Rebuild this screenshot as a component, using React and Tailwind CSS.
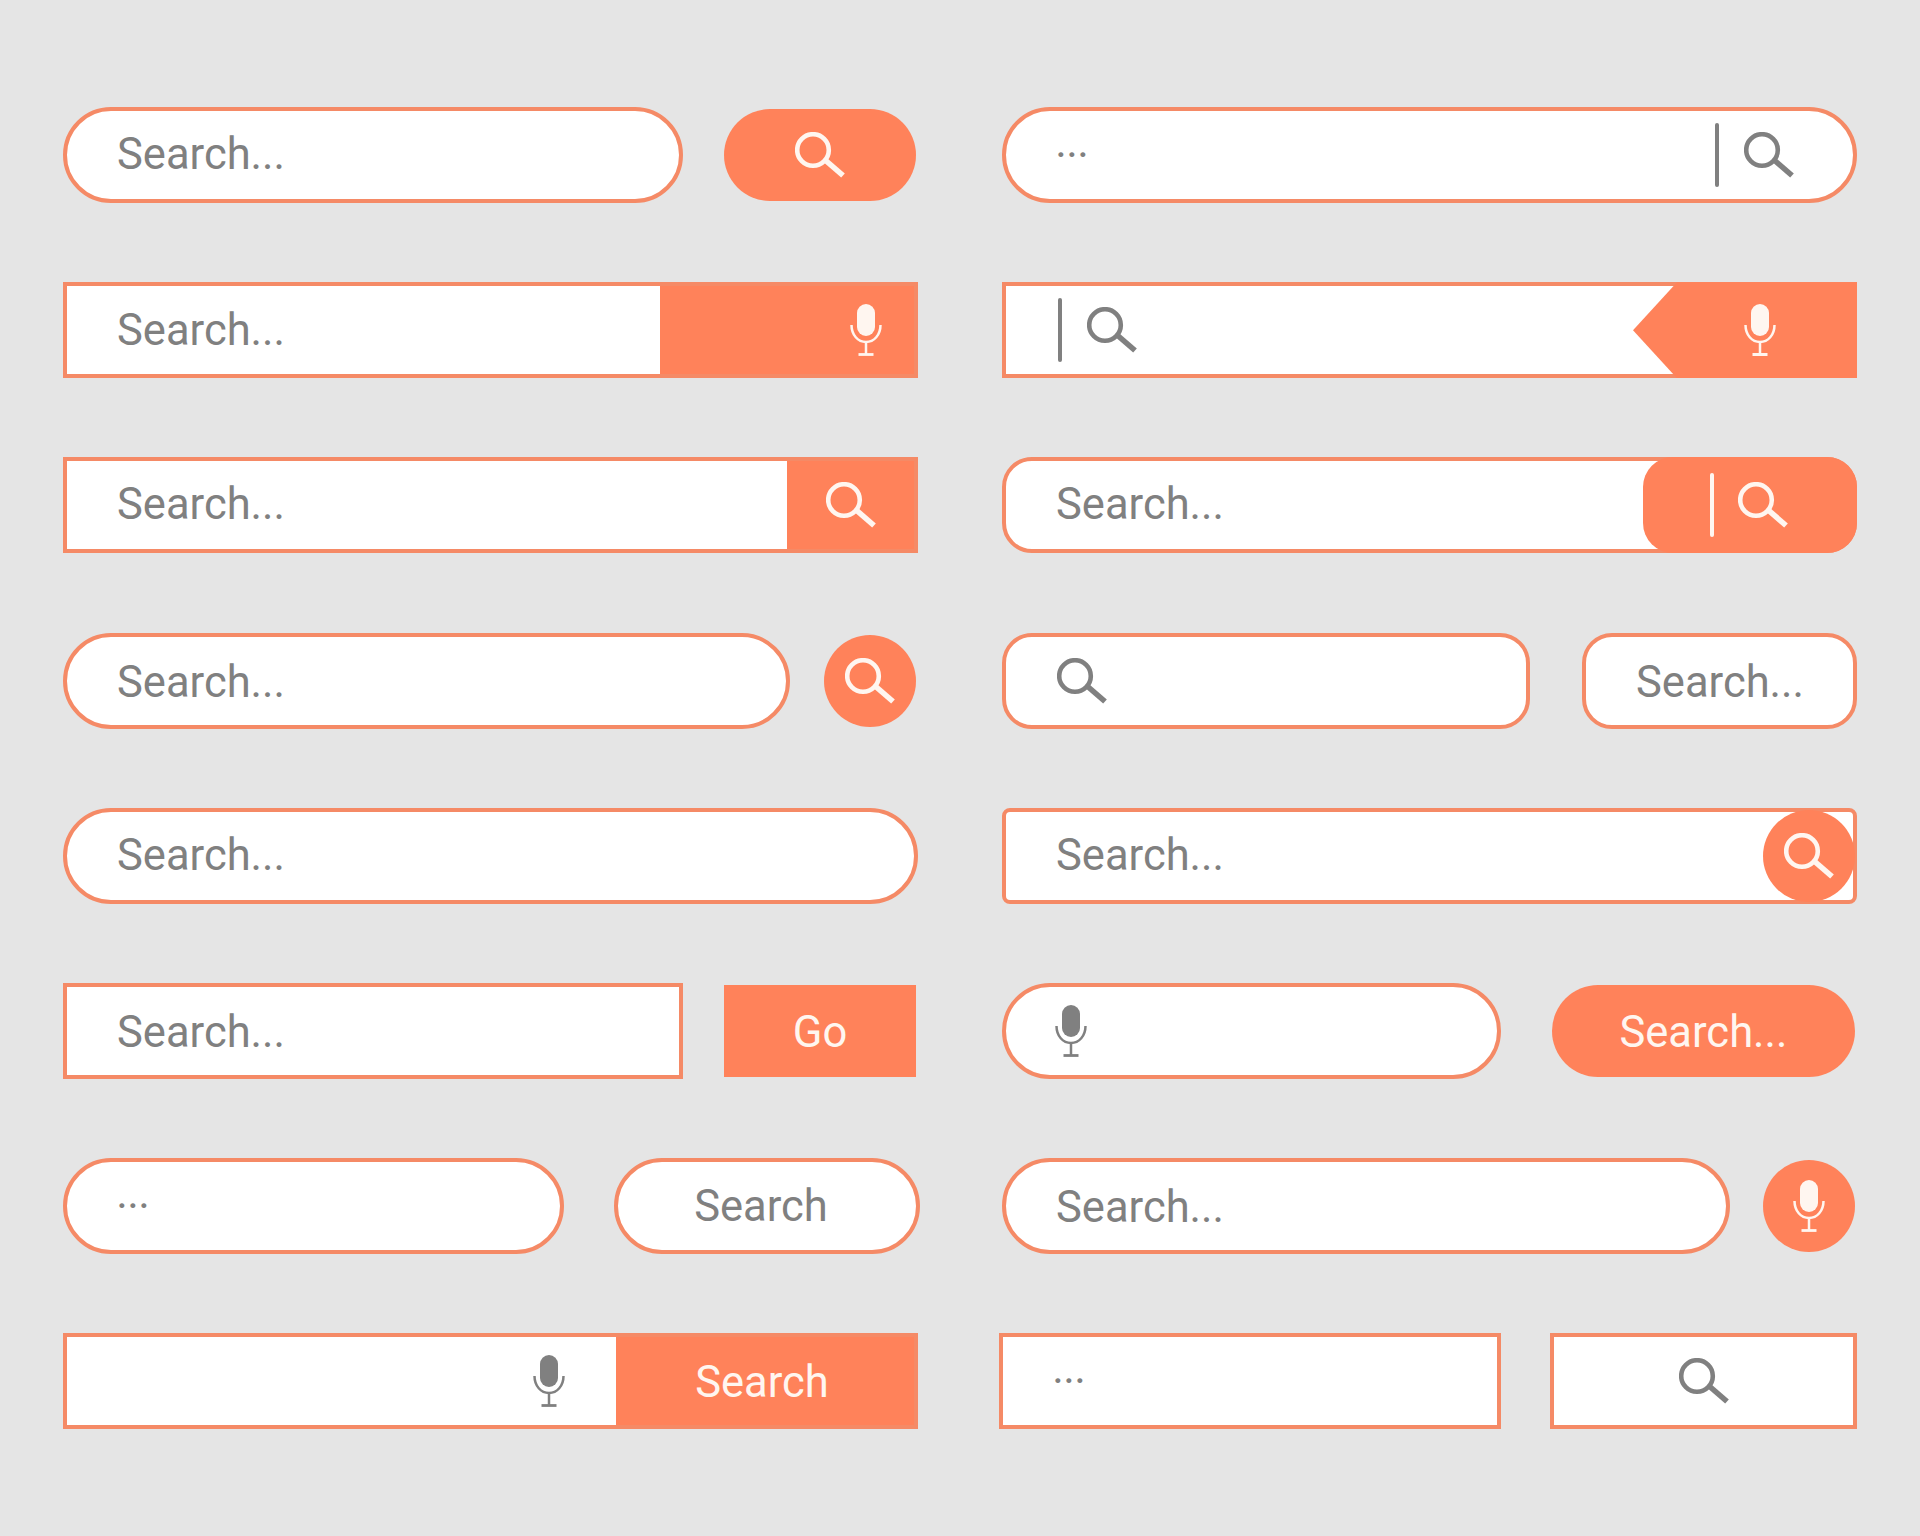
const boxBorder = 'border-4 border-[#f58a66] bg-white';
const fill = 'bg-[#ff825a]';
const light = 'text-[#fff6f0]';

function SearchIcon({ className = 'text-[#808080]' }) {
  return (
    <svg viewBox="0 0 50 46" className={`h-[46px] w-[50px] shrink-0 ${className}`} fill="none" stroke="currentColor">
      <circle cx="18" cy="18" r="15.8" strokeWidth="4.6" />
      <path d="M29.5 27.5 L48 43.5" strokeWidth="5.6" />
    </svg>
  );
}

function Mic({ className = 'text-[#808080]' }) {
  return (
    <svg viewBox="0 0 32 52" className={`h-[52px] w-[32px] shrink-0 ${className}`} fill="none" stroke="currentColor">
      <rect x="7" y="0" width="18" height="32" rx="9" fill="currentColor" stroke="none" />
      <path d="M1.5 21 C1.5 31 8 38 16 38 C24 38 30.5 31 30.5 21" strokeWidth="2.5" />
      <path d="M16 38 V50" strokeWidth="2.5" />
      <path d="M8.5 50.5 H23.5" strokeWidth="2.8" />
    </svg>
  );
}

function Divider({ className = 'bg-[#808080]' }) {
  return <div className={`h-16 w-1 shrink-0 rounded-full ${className}`} />;
}

function Label({ children = 'Search...', className = 'pt-[2px]' }) {
  return <span className={`pl-[50px] text-[43.5px] leading-none text-[#808080] ${className}`}>{children}</span>;
}

function Dots() {
  return <span className="pb-5 pl-[50px] text-[36px] font-medium leading-none tracking-[1px] text-[#808080]">...</span>;
}

function Row({ children }) {
  return <div className="flex h-24 items-center justify-between">{children}</div>;
}

function Box({ className = '', children }) {
  return <div className={`flex h-24 items-center ${boxBorder} ${className}`}>{children}</div>;
}

export default function App() {
  return (
    <div className="min-h-[1536px] bg-[#e5e5e5] pt-[107px] pl-[63px] [font-family:Roboto,sans-serif]">
      <div className="grid w-[1794px] grid-cols-[855px_855px] gap-x-[84px] gap-y-[79.2px]">
        {/* row 1 */}
        <Row>
          <Box className="w-[620px] rounded-full"><Label className="pb-[1px]" /></Box>
          <div className={`mr-0.5 flex h-[92px] w-[192px] items-center justify-center rounded-full ${fill}`}>
            <SearchIcon className={light} />
          </div>
        </Row>
        <Box className="justify-between rounded-full">
          <Dots />
          <div className="flex items-center gap-[25px] pr-[59px]">
            <Divider />
            <SearchIcon />
          </div>
        </Box>

        {/* row 2 */}
        <Box className="justify-between">
          <Label />
          <div className={`flex h-full w-[254px] items-center justify-end pr-8 ${fill}`}>
            <Mic className={light} />
          </div>
        </Box>
        <Box className="justify-between">
          <div className="flex items-center gap-[25px] pl-[52px]">
            <Divider />
            <SearchIcon />
          </div>
          <div className={`-my-1 -mr-1 flex h-24 w-[224px] items-center justify-end pr-[81px] [clip-path:polygon(44px_0,100%_0,100%_100%,44px_100%,0_50%)] ${fill}`}>
            <Mic className={light} />
          </div>
        </Box>

        {/* row 3 */}
        <Box className="justify-between">
          <Label className="pb-[1px]" />
          <div className={`flex h-full w-[127px] items-center justify-center ${fill}`}>
            <SearchIcon className={light} />
          </div>
        </Box>
        <Box className="justify-between rounded-[30px]">
          <Label className="pb-[1px]" />
          <div className={`-my-1 -mr-1 flex h-24 w-[214px] items-center gap-6 rounded-[30px] pl-[67px] ${fill}`}>
            <Divider className="bg-[#fff6f0]" />
            <SearchIcon className={light} />
          </div>
        </Box>

        {/* row 4 */}
        <Row>
          <Box className="w-[727px] rounded-full"><Label className="pt-[4px]" /></Box>
          <div className={`mr-0.5 flex h-[92px] w-[92px] items-center justify-center rounded-full ${fill}`}>
            <SearchIcon className={light} />
          </div>
        </Row>
        <Row>
          <Box className="w-[528px] rounded-[30px] pl-[51px]"><SearchIcon /></Box>
          <Box className="w-[275px] rounded-[30px]"><Label className="pt-[4px]" /></Box>
        </Row>

        {/* row 5 */}
        <Box className="rounded-full"><Label className="pb-[1px]" /></Box>
        <Box className="justify-between rounded-lg">
          <Label className="pb-[1px]" />
          <div className={`-mr-0.5 flex h-[92px] w-[92px] shrink-0 items-center justify-center rounded-full ${fill}`}>
            <SearchIcon className={light} />
          </div>
        </Box>

        {/* row 6 */}
        <Row>
          <Box className="w-[620px]"><Label className="pt-[4px]" /></Box>
          <div className={`mr-0.5 flex h-[92px] w-[192px] items-center justify-center pt-[4px] text-[43.5px] leading-none ${light} ${fill}`}>Go</div>
        </Row>
        <Row>
          <Box className="w-[499px] rounded-full pl-[49px]"><Mic /></Box>
          <div className={`mr-0.5 flex h-[92px] w-[303px] items-center justify-center rounded-full pt-[4px] text-[43.5px] leading-none ${light} ${fill}`}>Search...</div>
        </Row>

        {/* row 7 */}
        <Row>
          <Box className="w-[501px] rounded-full"><Dots /></Box>
          <Box className="-mr-0.5 w-[306px] justify-center rounded-full pt-[1px] pr-3 text-[43.5px] leading-none text-[#808080]">Search</Box>
        </Row>
        <Row>
          <Box className="w-[728px] rounded-full"><Label className="pt-[4px]" /></Box>
          <div className={`mr-0.5 flex h-[92px] w-[92px] items-center justify-center rounded-full ${fill}`}>
            <Mic className={light} />
          </div>
        </Row>

        {/* row 8 */}
        <Box className="justify-between">
          <div className="flex flex-1 justify-end pr-[51px]"><Mic /></div>
          <div className={`flex h-full w-[298px] items-center justify-center pt-[2px] pr-[6px] text-[43.5px] leading-none ${light} ${fill}`}>Search</div>
        </Box>
        <Row>
          <Box className="-ml-[3px] w-[502px]"><Dots /></Box>
          <Box className="w-[307px] justify-center"><SearchIcon /></Box>
        </Row>
      </div>
    </div>
  );
}
